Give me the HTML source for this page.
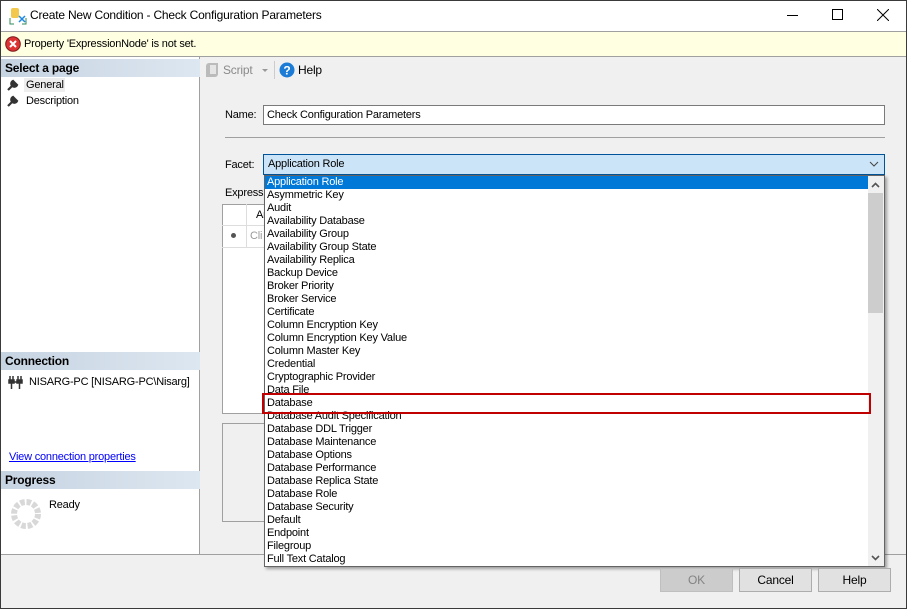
<!DOCTYPE html>
<html><head><meta charset="utf-8">
<style>
*{margin:0;padding:0;box-sizing:border-box}
body{width:907px;height:609px;overflow:hidden;font-family:"Liberation Sans",Arial,sans-serif;font-size:11px;letter-spacing:-0.2px;color:#000;background:#f0f0f0;position:relative}
.abs{position:absolute}
.hdr{position:absolute;left:1px;width:199px;height:18px;background:linear-gradient(to right,#c6d3e1,#dde7f1);font-weight:bold;font-size:12px;padding:2px 0 0 4px;color:#000}
.list div{height:13px;line-height:13px;padding-left:2px;font-size:11px;white-space:nowrap}
.btn{position:absolute;top:568px;width:73px;height:24px;border:1px solid #adadad;background:#e1e1e1;text-align:center;line-height:22px;font-size:12px}
</style></head><body>
<div class="abs" style="left:0;top:0;width:907px;height:609px;border:1px solid #3a3a3a;"></div>
<div class="abs" style="left:1px;top:1px;width:905px;height:30px;background:#fff"></div>
<svg class="abs" style="left:8px;top:6px" width="20" height="20" viewBox="0 0 20 20"><rect x="3" y="2" width="8" height="10" rx="2" fill="#f2c94c"/><path d="M2 12v6h4M18 12v6h-4" stroke="#2e8b57" fill="none"/><path d="M11 10l6 6M17 10l-6 6" stroke="#1e88e5" stroke-width="1.5"/></svg>
<div class="abs" style="left:30px;top:8px;font-size:12px">Create New Condition - Check Configuration Parameters</div>
<div class="abs" style="left:787px;top:15px;width:11px;height:1px;background:#000"></div>
<div class="abs" style="left:832px;top:9px;width:11px;height:11px;border:1px solid #000"></div>
<svg class="abs" style="left:877px;top:9px" width="12" height="12"><path d="M0 0L12 12M12 0L0 12" stroke="#000"/></svg>
<div class="abs" style="left:1px;top:31px;width:905px;height:26px;background:#ffffe1;border-top:1px solid #a0a0a0;border-bottom:1px solid #a0a0a0"></div>
<svg class="abs" style="left:5px;top:36px" width="16" height="16" viewBox="0 0 16 16"><circle cx="8" cy="8" r="7.3" fill="#d33" stroke="#7a1b1b"/><path d="M5 5l6 6M11 5l-6 6" stroke="#fff" stroke-width="2"/></svg>
<div class="abs" style="left:24px;top:38px">Property 'ExpressionNode' is not set.</div>
<div class="abs" style="left:1px;top:57px;width:199px;height:497px;background:#fff;border-right:1px solid #a0a0a0"></div>
<div class="hdr" style="top:59px">Select a page</div>
<div class="abs" style="left:24px;top:78px;width:41px;height:14px;background:#eeeeee"></div>
<svg class="abs" style="left:7px;top:78px" width="13" height="13" viewBox="0 0 13 13"><path d="M1 12l6-6M6 3a3 3 0 1 0 4 4l-2-2z" stroke="#333" stroke-width="2.2" fill="#333"/></svg>
<div class="abs" style="left:26px;top:79px">General</div>
<svg class="abs" style="left:7px;top:94px" width="13" height="13" viewBox="0 0 13 13"><path d="M1 12l6-6M6 3a3 3 0 1 0 4 4l-2-2z" stroke="#333" stroke-width="2.2" fill="#333"/></svg>
<div class="abs" style="left:26px;top:95px">Description</div>
<div class="hdr" style="top:352px">Connection</div>
<svg class="abs" style="left:7px;top:375px" width="16" height="14" viewBox="0 0 16 14"><path d="M3 1v4M6 1v4M11 1v4M14 1v4M2 5h5v3H2zM10 5h5v3h-5zM4.5 8v6M12.5 8v6M7 7h3" stroke="#333" stroke-width="1.5" fill="#333"/></svg>
<div class="abs" style="left:29px;top:376px">NISARG-PC [NISARG-PC\Nisarg]</div>
<div class="abs" style="left:9px;top:451px;color:#0000ff;text-decoration:underline">View connection properties</div>
<div class="hdr" style="top:471px">Progress</div>
<svg class="abs" style="left:10px;top:498px" width="32" height="32" viewBox="0 0 32 32"><circle cx="16" cy="16" r="12" fill="none" stroke="#d8d8d8" stroke-width="6" stroke-dasharray="4.5 1.8"/></svg>
<div class="abs" style="left:49px;top:499px">Ready</div>
<div class="abs" style="left:1px;top:554px;width:905px;height:1px;background:#a0a0a0"></div>
<svg class="abs" style="left:205px;top:62px" width="14" height="16" viewBox="0 0 14 16"><path d="M4 1h9v11a3 3 0 0 1-3 3H1V4a3 3 0 0 1 3-3z" fill="#bbb"/><rect x="5" y="3" width="6" height="9" fill="#e5e5e5"/></svg>
<div class="abs" style="left:223px;top:63px;color:#8a8a8a;font-size:12px">Script</div>
<div class="abs" style="left:262px;top:69px;border-left:3px solid transparent;border-right:3px solid transparent;border-top:3px solid #999"></div>
<div class="abs" style="left:274px;top:61px;width:1px;height:18px;background:#ccc"></div>
<svg class="abs" style="left:279px;top:62px" width="16" height="16" viewBox="0 0 16 16"><circle cx="8" cy="8" r="7.5" fill="#1c7cd5"/><text x="8" y="12.5" text-anchor="middle" font-family="Liberation Sans" font-weight="bold" font-size="12" fill="#fff">?</text></svg>
<div class="abs" style="left:298px;top:63px;font-size:12px">Help</div>
<div class="abs" style="left:225px;top:109px">Name:</div>
<div class="abs" style="left:263px;top:105px;width:622px;height:20px;background:#fff;border:1px solid #7a7a7a;padding:3px 0 0 3px">Check Configuration Parameters</div>
<div class="abs" style="left:225px;top:137px;width:660px;height:1px;background:#a0a0a0"></div>
<div class="abs" style="left:225px;top:159px">Facet:</div>
<div class="abs" style="left:263px;top:154px;width:622px;height:21px;background:#cce4f7;border:1px solid #005499;padding:3px 0 0 4px">Application Role</div>
<svg class="abs" style="left:869px;top:161px" width="10" height="7"><path d="M1 1l4 4 4-4" stroke="#444" fill="none"/></svg>
<div class="abs" style="left:225px;top:187px">Expressi</div>
<div class="abs" style="left:222px;top:204px;width:50px;height:210px;background:#fff;border:1px solid #a0a0a0"></div>
<div class="abs" style="left:222px;top:204px;width:50px;height:22px;border-bottom:1px solid #ddd"></div>
<div class="abs" style="left:246px;top:204px;width:1px;height:44px;background:#ddd"></div>
<div class="abs" style="left:222px;top:247px;width:50px;height:1px;background:#ddd"></div>
<div class="abs" style="left:256px;top:209px">An</div>
<div class="abs" style="left:231px;top:233px;width:5px;height:5px;border-radius:50%;background:#555"></div>
<div class="abs" style="left:250px;top:230px;color:#999">Cli</div>
<div class="abs" style="left:222px;top:423px;width:50px;height:99px;border:1px solid #a0a0a0"></div>
<div class="abs" style="left:264px;top:175px;width:621px;height:392px;background:#fff;border:1px solid #646464;box-shadow:2px 2px 3px rgba(0,0,0,.35)"></div>
<div class="abs list" style="left:265px;top:176px;width:603px">
<div style="background:#0078d7;color:#fff">Application Role</div>
<div>Asymmetric Key</div><div>Audit</div><div>Availability Database</div><div>Availability Group</div><div>Availability Group State</div><div>Availability Replica</div><div>Backup Device</div><div>Broker Priority</div><div>Broker Service</div><div>Certificate</div><div>Column Encryption Key</div><div>Column Encryption Key Value</div><div>Column Master Key</div><div>Credential</div><div>Cryptographic Provider</div><div>Data File</div><div>Database</div><div>Database Audit Specification</div><div>Database DDL Trigger</div><div>Database Maintenance</div><div>Database Options</div><div>Database Performance</div><div>Database Replica State</div><div>Database Role</div><div>Database Security</div><div>Default</div><div>Endpoint</div><div>Filegroup</div><div>Full Text Catalog</div>
</div>
<div class="abs" style="left:868px;top:176px;width:16px;height:390px;background:#f0f0f0"></div>
<div class="abs" style="left:868px;top:193px;width:15px;height:120px;background:#cdcdcd"></div>
<svg class="abs" style="left:871px;top:182px" width="9" height="6"><path d="M1 5l3.5-3.5L8 5" stroke="#555" stroke-width="1.6" fill="none"/></svg>
<svg class="abs" style="left:871px;top:555px" width="9" height="6"><path d="M1 1l3.5 3.5L8 1" stroke="#555" stroke-width="1.6" fill="none"/></svg>
<div class="abs" style="left:262px;top:393px;width:609px;height:21px;border:2px solid #c00000"></div>
<div class="btn" style="left:660px;background:#cccccc;border-color:#bfbfbf;color:#838383">OK</div>
<div class="btn" style="left:739px">Cancel</div>
<div class="btn" style="left:818px">Help</div>
</body></html>
